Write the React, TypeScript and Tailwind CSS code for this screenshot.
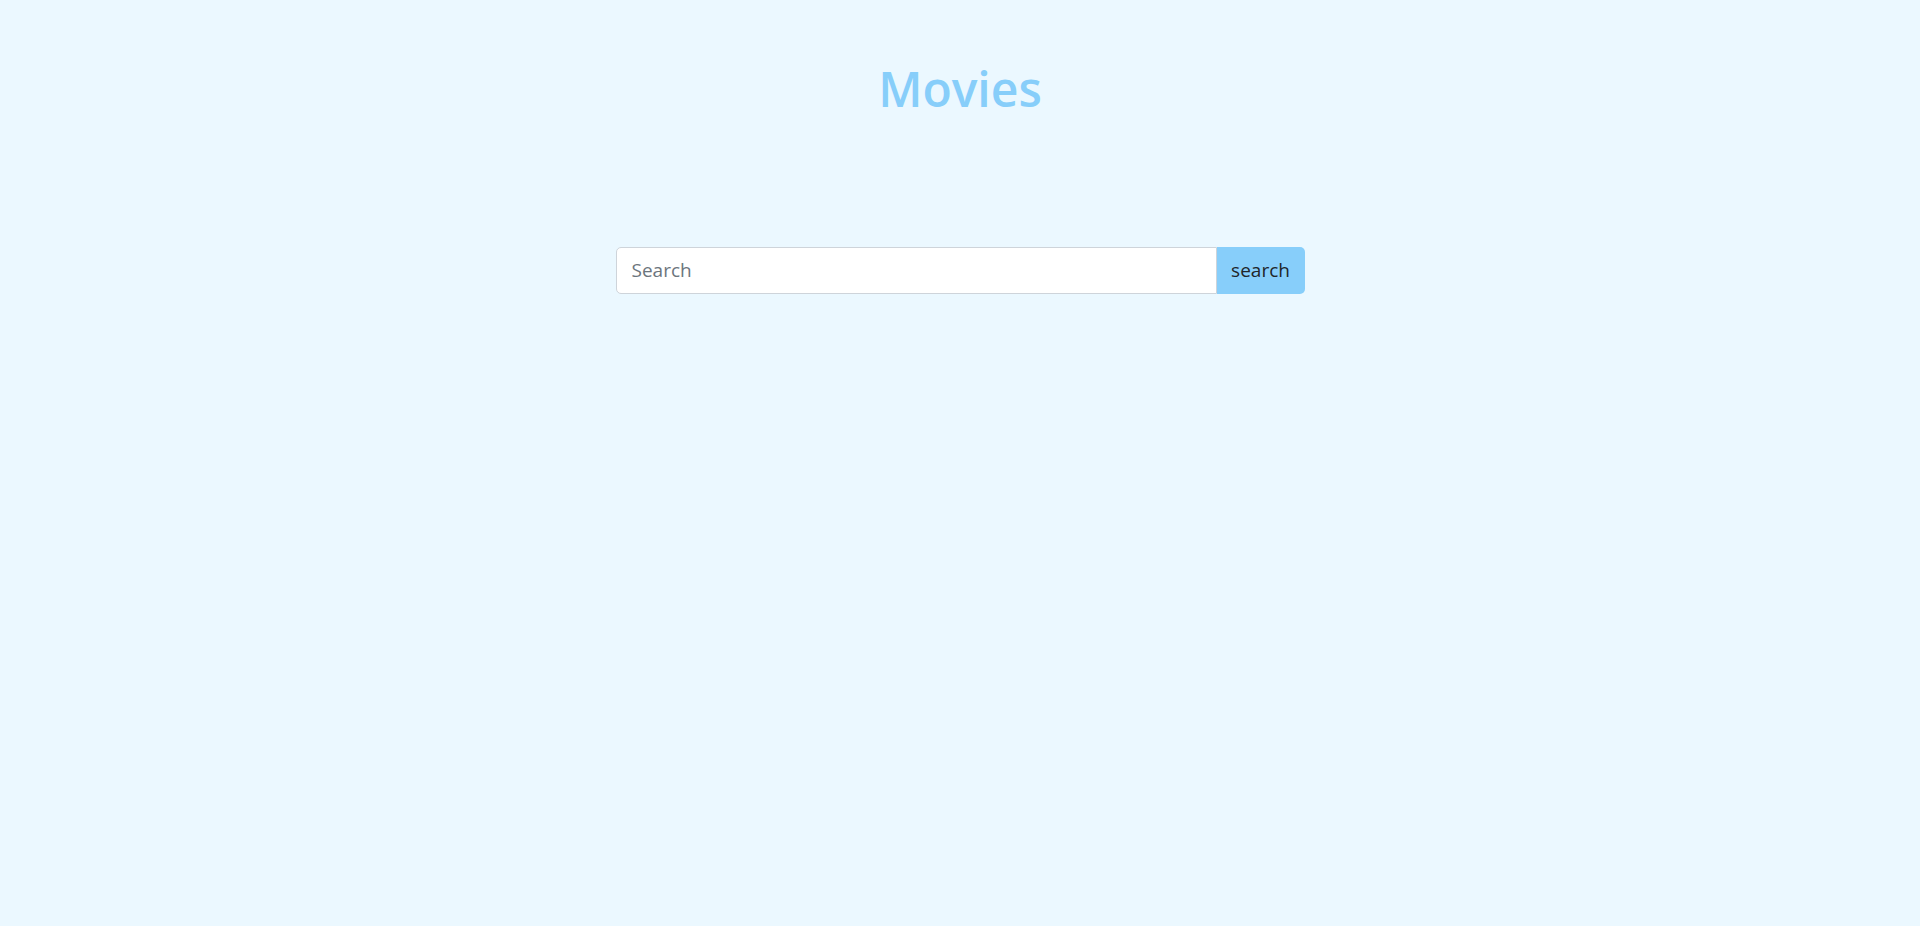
import React, { useState } from 'react';

const App: React.FC = () => {
  const [query, setQuery] = useState('');

  return (
    <div className="min-h-[926px] w-full bg-[#ebf8ff] font-['Open_Sans','Noto_Sans',sans-serif]">
      <div className="flex flex-col items-center pt-[60px]">
        {/* Title */}
        <h1 className="text-[48px] font-semibold leading-[1.2] text-[#87cefa]">Movies</h1>

        {/* Search bar */}
        <form
          className="mt-[129px] flex w-[689px]"
          onSubmit={(e) => e.preventDefault()}
        >
          <input
            value={query}
            onChange={(e) => setQuery(e.target.value)}
            placeholder="Search"
            className="h-[47px] flex-1 rounded-l-[5px] border border-[#ced4da] bg-white px-[15px] text-[19px] text-[#495057] placeholder:text-[#6c757d] outline-none"
          />
          <button
            type="submit"
            className="h-[47px] w-[88px] rounded-r-[5px] bg-[#87cefa] text-[19px] text-[#212529]"
          >
            search
          </button>
        </form>
      </div>
    </div>
  );
};

export default App;
